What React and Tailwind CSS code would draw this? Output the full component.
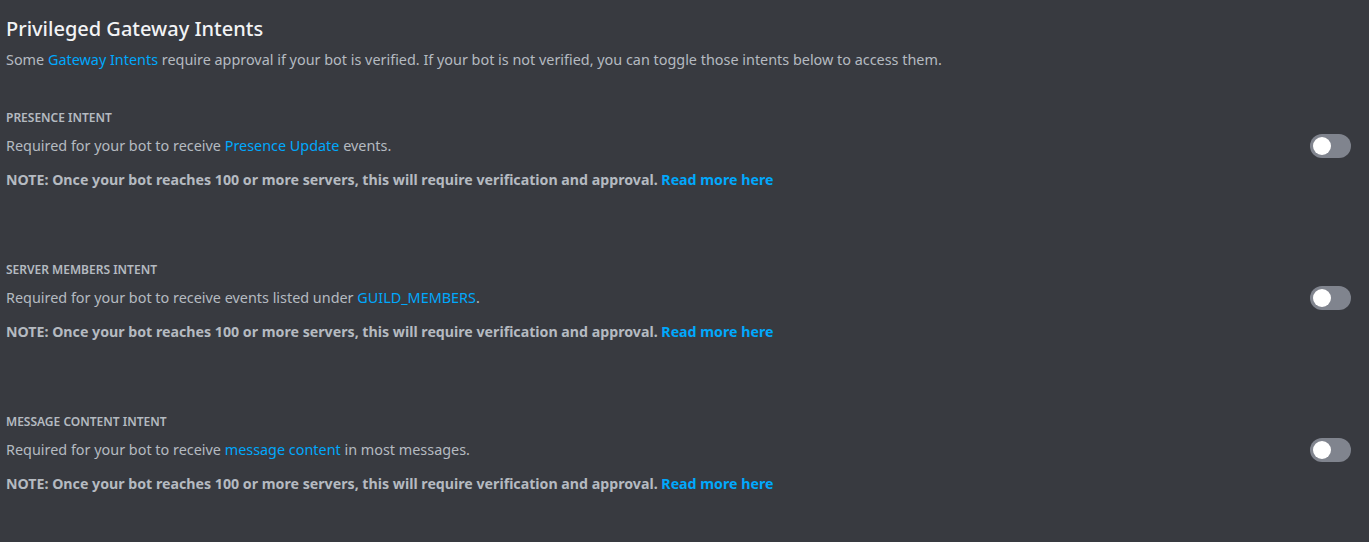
import React from "react";

const sections = [
  {
    label: "PRESENCE INTENT",
    before: "Required for your bot to receive ",
    link: "Presence Update",
    after: " events.",
  },
  {
    label: "SERVER MEMBERS INTENT",
    before: "Required for your bot to receive events listed under ",
    link: "GUILD_MEMBERS",
    after: ".",
  },
  {
    label: "MESSAGE CONTENT INTENT",
    before: "Required for your bot to receive ",
    link: "message content",
    after: " in most messages.",
  },
];

const Toggle = () => (
  <div className="w-[41px] h-[24px] rounded-full bg-[#80848e] flex items-center px-[3px] shrink-0">
    <div className="w-[18px] h-[18px] rounded-full bg-white" />
  </div>
);

export default function App() {
  return (
    <div
      className="min-h-screen w-full bg-[#383a40] pl-[6px] pr-[18px] pt-[16px]"
      style={{ fontFamily: '"Noto Sans", "Open Sans", sans-serif' }}
    >
      <h1 className="text-[20px] leading-[26px] font-medium text-[#f2f3f5]">
        Privileged Gateway Intents
      </h1>
      <p className="mt-[8px] text-[14.4px] leading-[20px] text-[#b5bac1]">
        Some <span className="text-[#00a8fc]">Gateway Intents</span> require approval if your bot is verified. If your bot is not verified, you can toggle those intents below to access them.
      </p>
      <div className="mt-[40px] flex flex-col gap-[72px]">
        {sections.map((s) => (
          <div key={s.label} className="flex flex-col">
            <div className="text-[12px] leading-[16px] font-semibold text-[#b5bac1]">{s.label}</div>
            <div className="mt-[8px] flex items-center justify-between">
              <div className="text-[14.4px] leading-[24px] text-[#b5bac1]">
                {s.before}
                <span className="text-[#00a8fc]">{s.link}</span>
                {s.after}
              </div>
              <Toggle />
            </div>
            <div className="mt-[12px] text-[14.2px] leading-[20px] font-bold text-[#b5bac1]">
              NOTE: Once your bot reaches 100 or more servers, this will require verification and approval.{" "}
              <span className="text-[#00a8fc]">Read more here</span>
            </div>
          </div>
        ))}
      </div>
    </div>
  );
}
